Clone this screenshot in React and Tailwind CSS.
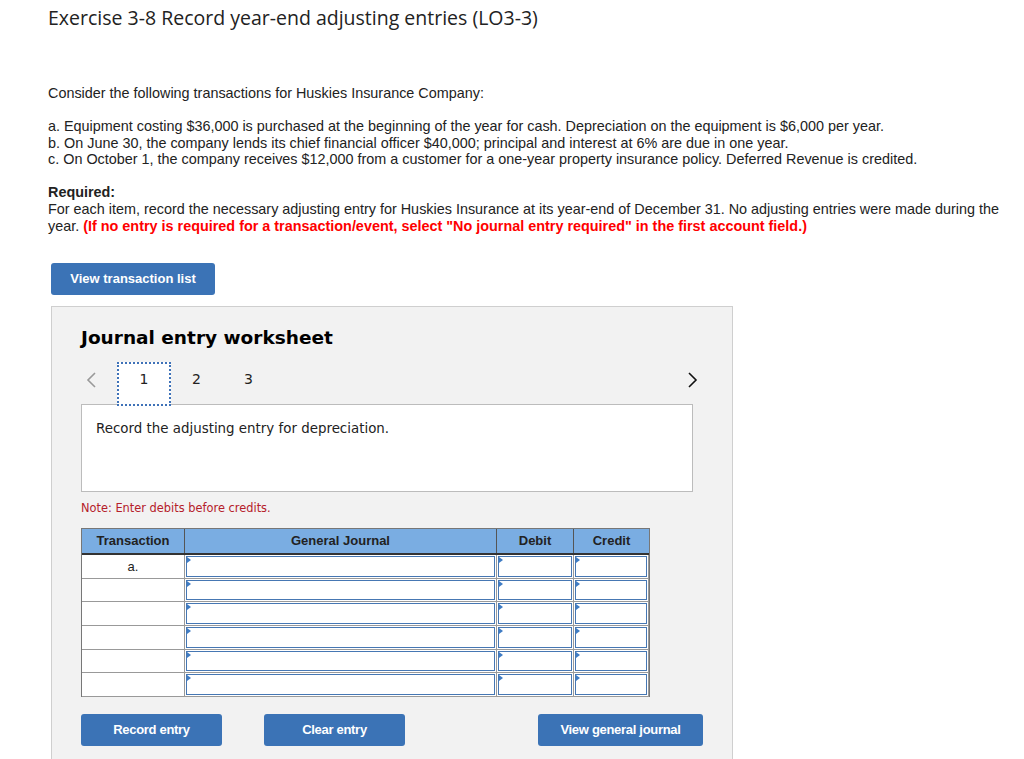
import React from 'react';

const body = { fontFamily: '"Liberation Sans", Arial, sans-serif' };
const verdana = { fontFamily: '"DejaVu Sans", Verdana, sans-serif' };

const InputCell = () => (
  <div className="relative h-full border-b border-r border-[#9a9a9a] bg-white">
    <div className="absolute inset-x-[1px] bottom-[1px] top-[1px] border-[1.5px] border-[#4677b3] bg-white" />
    <div className="absolute left-[2px] top-[2px] h-0 w-0 border-y-[3px] border-l-[4px] border-y-transparent border-l-[#3f7cc4]" />
  </div>
);

const rows = ['a.', '', '', '', '', ''];

export default function App() {
  return (
    <div className="h-[759px] w-[1024px] overflow-hidden bg-white text-[#222]" style={body}>
      <div className="pl-12 pr-[18px] pt-[6px]">
        <h1 className="text-[19.5px] font-medium leading-[24px] text-[#222]" style={{ fontFamily: '"Open Sans", sans-serif' }}>
          Exercise 3-8 Record year-end adjusting entries (LO3-3)
        </h1>

        <div className="mt-[55px] text-[14.4px] leading-[16.5px]">
          <p>Consider the following transactions for Huskies Insurance Company:</p>
          <div className="mt-[16.5px]">
            <p>a. Equipment costing $36,000 is purchased at the beginning of the year for cash. Depreciation on the equipment is $6,000 per year.</p>
            <p>b. On June 30, the company lends its chief financial officer $40,000; principal and interest at 6% are due in one year.</p>
            <p>c. On October 1, the company receives $12,000 from a customer for a one-year property insurance policy. Deferred Revenue is credited.</p>
          </div>
          <div className="mt-[16.5px] leading-[17px]">
            <p className="font-bold">Required:</p>
            <p>
              For each item, record the necessary adjusting entry for Huskies Insurance at its year-end of December 31. No adjusting entries were made during the year.{' '}
              <span className="font-bold text-[#ff0000]">
                (If no entry is required for a transaction/event, select "No journal entry required" in the first account field.)
              </span>
            </p>
          </div>
        </div>
      </div>

      <div className="ml-[51px] mt-[28px]">
        <button className="h-[32px] w-[164px] rounded-[3px] bg-[#3b73b6] text-[13px] font-bold text-white">
          View transaction list
        </button>
      </div>

      <div className="ml-[51px] mt-[11px] w-[682px] border border-[#cfcfcf] bg-[#f2f2f2] pb-[40px] pl-[29px] pr-[40px] pt-[19px]">
        <h2 className="text-[18.5px] font-bold leading-[24px] text-black" style={verdana}>Journal entry worksheet</h2>

        <div className="mt-[12px] flex h-[44px] items-center text-[14px]" style={verdana}>
          <svg width="14" height="18" viewBox="0 0 14 18" className="mb-[9px] ml-[4px]">
            <path d="M10 2 L3 9 L10 16" fill="none" stroke="#999" strokeWidth="1.6" />
          </svg>
          <div className="ml-[18px] flex h-[44px] w-[54px] items-center justify-center border-2 border-dotted border-[#3f72b8] bg-white pb-[9px]">1</div>
          <div className="mb-[9px] ml-[21px]">2</div>
          <div className="mb-[9px] ml-[43px]">3</div>
          <svg width="14" height="18" viewBox="0 0 14 18" className="-mr-[7px] mb-[9px] ml-auto">
            <path d="M4 2 L11 9 L4 16" fill="none" stroke="#111" strokeWidth="1.6" />
          </svg>
        </div>

        <div className="-mt-[2px] h-[88px] w-[612px] border border-[#bcbcbc] bg-white px-[14px] pt-[14px] text-[13.4px]" style={verdana}>
          Record the adjusting entry for depreciation.
        </div>

        <p className="mt-[8px] text-[11.4px] leading-[16px] text-[#b5202a]" style={verdana}>Note: Enter debits before credits.</p>

        <div className="mt-[12px] w-[569px] border-l border-r border-t border-[#777]">
          <div className="grid h-[26px] grid-cols-[103px_312px_77px_75px] border-b-2 border-[#333] bg-[#7aade2] text-[13px] font-bold text-[#222]">
            <div className="flex items-center justify-center border-r border-[#555]">Transaction</div>
            <div className="flex items-center justify-center border-r border-[#555]">General Journal</div>
            <div className="flex items-center justify-center border-r border-[#555]">Debit</div>
            <div className="flex items-center justify-center">Credit</div>
          </div>
          {rows.map((r, i) => (
            <div key={i} className="grid h-[23.7px] grid-cols-[103px_312px_77px_75px]">
              <div className="flex items-center justify-center border-b border-r border-[#999] bg-white text-[13px]">{r}</div>
              <InputCell />
              <InputCell />
              <InputCell />
            </div>
          ))}
        </div>

        <div className="mt-[17px] flex text-[13px] font-bold tracking-[-0.3px] text-white">
          <button className="h-[32px] w-[141px] shrink-0 rounded-[3px] bg-[#3b73b6]">Record entry</button>
          <button className="ml-[42px] h-[32px] w-[141px] shrink-0 rounded-[3px] bg-[#3b73b6]">Clear entry</button>
          <button className="ml-[133px] h-[32px] w-[165px] shrink-0 rounded-[3px] bg-[#3b73b6]">View general journal</button>
        </div>
      </div>
    </div>
  );
}
